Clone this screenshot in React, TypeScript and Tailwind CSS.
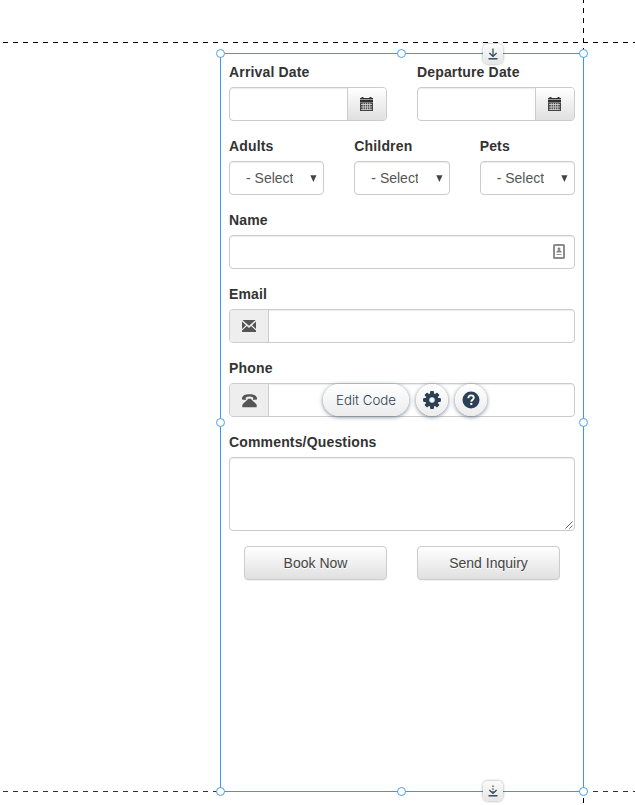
import type { ReactNode } from 'react';

function CalendarIcon() {
  return (
    <svg width="13" height="14" viewBox="0 0 13 14" className="mr-px block" fill="none">
      <path fill="#333" d="M0 2V1h1.5V0h2v1h6V0h2v1H13v1z" />
      <rect y="2" width="13" height="1" fill="#9a9a9a" />
      <rect y="3" width="13" height="2.6" fill="#2f2f2f" />
      <rect y="6" width="13" height="8" fill="#444" />
      <path
        stroke="#dadada"
        strokeWidth=".8"
        d="M1 7.5h11M1 10h11M1 12.4h11M3.2 6v7M5.4 6v7M7.6 6v7M9.8 6v7"
      />
    </svg>
  );
}

function EnvelopeIcon() {
  return (
    <svg width="14" height="12" viewBox="0 0 14 12" className="block" fill="#555">
      <path d="M.4 0h13.2L7 5.8z" />
      <path d="M0 1.4 4 5.2 0 9zM14 1.4 10 5.2 14 9z" />
      <path d="M0 12v-1.4l4.9-4.5L7 8l2.1-1.9 4.9 4.5V12z" />
    </svg>
  );
}

function PhoneIcon() {
  return (
    <svg width="15" height="14" viewBox="0 0 15 14" className="mt-0.5 block" fill="#555">
      <path d="M0 4.5C0 1.8 3 .3 7.5.3S15 1.8 15 4.5v.9l-3.8.5V3.5C9 2.3 6 2.3 3.8 3.5v2.4L0 5.4z" />
      <path d="M6 4.8h3l.8 1.2 4.4 3.9c.4.5.5 1 .5 1.6v1.7H.3v-1.7c0-.6.1-1.1.5-1.6L5.2 6z" />
    </svg>
  );
}

function ContactIcon() {
  return (
    <svg width="12" height="15" viewBox="0 0 12 15" className="-mt-px block" fill="none">
      <rect x="1" y="1" width="10" height="13" rx=".6" stroke="#8c8c8c" strokeWidth="2" />
      <circle cx="6" cy="4.8" r="1.4" fill="#858585" />
      <path d="M3.3 8.6c0-3.4 5.4-3.4 5.4 0z" fill="#858585" />
      <path d="M3.5 10.5h5" stroke="#999" />
    </svg>
  );
}

const TEETH = [0, 45, 90, 135, 180, 225, 270, 315];

function GearIcon() {
  return (
    <svg width="18" height="18" viewBox="0 0 18 18" className="block">
      <circle cx="9" cy="9" r="4.7" fill="none" stroke="#2b4055" strokeWidth="4" />
      {TEETH.map((a) => (
        <rect key={a} x="7" y=".1" width="4" height="4" rx="1" fill="#2b4055" transform={`rotate(${a} 9 9)`} />
      ))}
    </svg>
  );
}

function HelpIcon() {
  return (
    <svg width="18" height="18" viewBox="0 0 18 18" className="block" fill="none">
      <circle cx="9" cy="9" r="8.5" fill="#2b4055" />
      <path d="M6.3 7.2C6.3 5.4 7.5 4.4 9 4.4s2.8.9 2.8 2.4c0 1.9-2.5 2-2.5 4" stroke="#fff" strokeWidth="1.9" />
      <rect x="8.3" y="12" width="2" height="2" fill="#fff" />
    </svg>
  );
}

function StretchHandle({ dotted, className }: { dotted?: boolean; className: string }) {
  return (
    <div
      className={`absolute flex h-5 w-5 items-center justify-center rounded-[5px] bg-gradient-to-b from-[#fbfbfb] to-[#e6e6e6] shadow-[0_0_3px_rgba(0,0,0,0.4)] ${className}`}
    >
      <svg width="10" height="12" viewBox="0 0 10 12" className="block" fill="none" stroke="#2b4055">
        <path d="M5 .5v8" strokeWidth="1.2" strokeDasharray={dotted ? '1.5 1.2' : undefined} />
        <path d="M1.4 5 5 8.4 8.6 5" strokeWidth="1.2" />
        <path d="M.5 10.8h9" strokeWidth="1.4" />
      </svg>
    </div>
  );
}

function Knob({ className }: { className: string }) {
  return <div className={`absolute h-[9px] w-[9px] rounded-full border border-[#4ba0ee] bg-white ${className}`} />;
}

function Field({ label, children }: { label: string; children: ReactNode }) {
  return (
    <div className="min-w-0 flex-1">
      <div className="mb-[5px] h-5 text-sm leading-5 font-bold tracking-[0.16px] whitespace-nowrap text-[#333]">{label}</div>
      {children}
    </div>
  );
}

const box = 'h-[34px] rounded border border-[#ccc] bg-white shadow-[inset_0_1px_1px_rgba(0,0,0,0.075)]';

function DateInput() {
  return (
    <div className={`flex overflow-hidden ${box}`}>
      <div className="flex-1" />
      <div className="flex w-[39px] items-center justify-center border-l border-[#ccc] bg-gradient-to-b from-white to-[#e0e0e0] pb-px">
        <CalendarIcon />
      </div>
    </div>
  );
}

function SelectInput() {
  return (
    <div className={`flex items-center justify-between pr-1.5 pl-4 text-sm text-[#555] ${box}`}>
      <span className="w-[47px] overflow-hidden whitespace-nowrap">- Select</span>
      <svg width="7" height="7" viewBox="0 0 7 7" className="block" fill="#444">
        <path d="M.3.2h6.2L3.4 7z" />
      </svg>
    </div>
  );
}

function AddonInput({ icon }: { icon: ReactNode }) {
  return (
    <div className={`flex overflow-hidden ${box}`}>
      <div className="flex w-[39px] items-center justify-center border-r border-[#ccc] bg-[#eee]">{icon}</div>
    </div>
  );
}

function FormButton({ children }: { children: ReactNode }) {
  return (
    <button className="h-[34px] flex-1 rounded border border-[#ccc] bg-gradient-to-b from-white to-[#e0e0e0] text-sm text-[#444] shadow-[0_1px_1px_rgba(0,0,0,0.06)] [text-shadow:0_1px_0_#fff]">
      {children}
    </button>
  );
}

const pill =
  'flex h-8 items-center justify-center bg-gradient-to-b from-white to-[#ececec] shadow-[0_1px_4px_rgba(43,64,85,0.65)]';

export default function App() {
  return (
    <div className="relative h-[805px] w-[635px] overflow-hidden bg-white pt-[53px] pl-[220px] font-['Liberation_Sans',Arial,sans-serif]">
      <div className="absolute top-[42px] right-0 left-[3px] h-px bg-[repeating-linear-gradient(90deg,#000_0_5px,transparent_5px_10px)]" />
      <div className="absolute top-[791px] right-0 left-[3px] h-px bg-[repeating-linear-gradient(90deg,#333_0_5px,transparent_5px_10px)]" />
      <div className="absolute top-[-2px] left-[583px] h-[805px] w-px bg-[repeating-linear-gradient(180deg,#000_0_5px,transparent_5px_10px)]" />

      <div className="relative h-[739px] w-[364px] border border-[#3c97e8] bg-white p-2">
        <div className="flex flex-col gap-[15px]">
          <div className="flex gap-[30px]">
            <Field label="Arrival Date"><DateInput /></Field>
            <Field label="Departure Date"><DateInput /></Field>
          </div>
          <div className="flex gap-[30px]">
            <Field label="Adults"><SelectInput /></Field>
            <Field label="Children"><SelectInput /></Field>
            <Field label="Pets"><SelectInput /></Field>
          </div>
          <Field label="Name">
            <div className={`flex items-center justify-end pr-[9px] ${box}`}>
              <ContactIcon />
            </div>
          </Field>
          <Field label="Email"><AddonInput icon={<EnvelopeIcon />} /></Field>
          <Field label="Phone"><AddonInput icon={<PhoneIcon />} /></Field>
          <Field label="Comments/Questions">
            <div className="flex h-[74px] items-end justify-end rounded border border-[#ccc] bg-white p-px shadow-[inset_0_1px_1px_rgba(0,0,0,0.075)]">
              <svg width="8" height="8" viewBox="0 0 8 8" className="block" stroke="#555" strokeWidth=".9">
                <path d="M.5 7.5l7-7M4.5 7.5l3-3" />
              </svg>
            </div>
          </Field>
          <div className="flex gap-[30px] px-[15px]">
            <FormButton>Book Now</FormButton>
            <FormButton>Send Inquiry</FormButton>
          </div>
        </div>

        <Knob className="-top-[5px] -left-[5px]" />
        <Knob className="-top-[5px] left-[176px]" />
        <Knob className="-top-[5px] -right-[5px]" />
        <Knob className="top-[364px] -left-[5px]" />
        <Knob className="top-[364px] -right-[5px]" />
        <Knob className="-bottom-[5px] -left-[5px]" />
        <Knob className="-bottom-[5px] left-[176px]" />
        <Knob className="-right-[5px] -bottom-[5px]" />
        <StretchHandle className="-top-[10px] left-[262px]" />
        <StretchHandle dotted className="-bottom-[10px] left-[262px]" />

        <div className="absolute top-[330px] left-[102px] flex gap-[7px]">
          <div className={`w-[86px] rounded-full pt-0.5 font-['Inter',sans-serif] text-[13.3px] font-light text-[#2b4055] ${pill}`}>
            Edit Code
          </div>
          <div className={`w-8 rounded-full ${pill}`}><GearIcon /></div>
          <div className={`w-8 rounded-full ${pill}`}><HelpIcon /></div>
        </div>
      </div>
    </div>
  );
}
